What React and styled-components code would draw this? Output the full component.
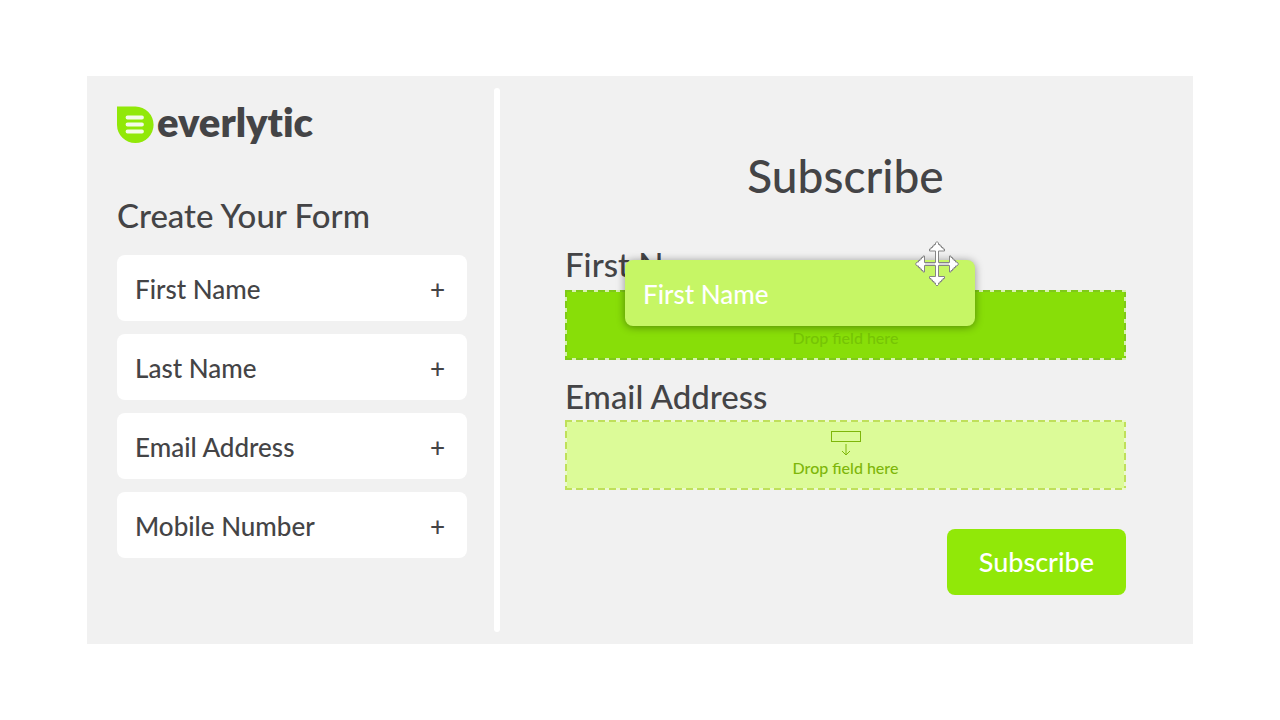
import React from "react";
import styled, { createGlobalStyle } from "styled-components";

const GlobalStyle = createGlobalStyle`
  *, *::before, *::after { box-sizing: border-box; }
  body {
    margin: 0;
    background: #ffffff;
    color: #444446;
    font-family: Lato, "Noto Sans", sans-serif;
    font-weight: 500;
  }
  button { font: inherit; color: inherit; border: 0; cursor: pointer; }
`;

const Page = styled.div`
  display: flex;
  flex-direction: column;
  min-height: 100vh;
  padding: 76px 87px;
`;

const Builder = styled.main`
  display: grid;
  grid-template-columns: minmax(0, 407fr) 6px minmax(0, 693fr);
  flex: 1;
  padding: 12px 0;
  background: #f1f1f1;
`;

const Sidebar = styled.aside`
  padding: 18px 27px 0 30px;
`;

const Divider = styled.div`
  border-radius: 3px;
  background: #ffffff;
`;

const Brand = styled.div`
  display: flex;
  align-items: center;
  gap: 3px;
  height: 38px;
`;

const Wordmark = styled.span`
  padding-bottom: 6px;
  font-size: 40px;
  line-height: 32px;
  font-weight: 800;
  font-variant-ligatures: none;
`;

const PanelTitle = styled.h2`
  margin: 51px 0 0;
  font-size: 33px;
  line-height: 40px;
  font-weight: 500;
`;

const FieldList = styled.ul`
  display: flex;
  flex-direction: column;
  gap: 13px;
  margin: 20px 0 0;
  padding: 0;
  list-style: none;
`;

const FieldCard = styled.button`
  display: flex;
  align-items: center;
  justify-content: space-between;
  width: 100%;
  height: 66px;
  padding: 2px 22px 0 18px;
  border-radius: 8px;
  background: #ffffff;
  font-size: 26px;
  line-height: 32px;
`;

const Canvas = styled.section`
  padding: 64px 67px 0 65px;
`;

const FormTitle = styled.h1`
  margin: 0;
  font-size: 46px;
  line-height: 48px;
  font-weight: 500;
  text-align: center;
`;

const Field = styled.div`
  margin-top: ${(p) => (p.$first ? 44 : 16)}px;
`;

const FieldLabel = styled.h3`
  margin: 0;
  font-size: 33px;
  line-height: 40px;
  font-weight: 500;
`;

const dashes = (angle, dash, gap) =>
  `repeating-linear-gradient(${angle}, ${dash} 0 7px, ${gap} 7px 11px)`;

const DropZone = styled.div`
  --dash: ${(p) => (p.$active ? "#7fca18" : "#bfe05a")};
  --gap: ${(p) => (p.$active ? "#d8f2b0" : "#ebf9cc")};
  position: relative;
  display: flex;
  flex-direction: column;
  align-items: center;
  height: 70px;
  margin-top: ${(p) => (p.$active ? 6 : 4)}px;
  padding-top: 10px;
  background:
    ${dashes("90deg", "var(--dash)", "var(--gap)")} top / 100% 2px no-repeat,
    ${dashes("90deg", "var(--dash)", "var(--gap)")} bottom / 100% 2px no-repeat,
    ${dashes("180deg", "var(--dash)", "var(--gap)")} left / 2px 100% no-repeat,
    ${dashes("180deg", "var(--dash)", "var(--gap)")} right / 2px 100% no-repeat,
    ${(p) => (p.$active ? "#88de08" : "#dcfb98")};
  color: ${(p) => (p.$active ? "#76c405" : "#7eb60a")};
  font-size: 16px;
  line-height: 20px;
`;

const DraggedCard = styled.div`
  position: absolute;
  top: -30px;
  left: 60px;
  display: flex;
  align-items: center;
  width: 350px;
  height: 66px;
  padding: 2px 18px 0;
  border-radius: 8px;
  background: #c6f665;
  box-shadow: 0 1px 8px rgba(0, 0, 0, 0.4);
  color: #ffffff;
  font-size: 26px;
  line-height: 32px;
`;

const MoveCursor = styled.svg`
  position: absolute;
  top: -19px;
  right: 16px;
`;

const Actions = styled.div`
  display: flex;
  justify-content: flex-end;
  margin-top: 39px;
`;

const SubmitButton = styled.button`
  height: 66px;
  padding: 0 32px;
  border-radius: 8px;
  background: #91e808;
  color: #ffffff;
  font-size: 27px;
  line-height: 32px;
`;

const FIELDS = ["First Name", "Last Name", "Email Address", "Mobile Number"];

function Logo() {
  return (
    <svg width="37" height="38" viewBox="0 0 37 38" aria-hidden="true">
      <path d="M0 0.5H18.5A18.3 18.3 0 1 1 0 19Z" fill="#91e808" />
      <path d="M10.5 11.5H25M10.5 18.5H25M10.5 25.5H25" stroke="#f4fbe8" strokeWidth="3.8" strokeLinecap="round" />
    </svg>
  );
}

function DropHint() {
  return (
    <>
      <svg width="30" height="28" viewBox="0 0 30 28" fill="none" stroke="currentColor" aria-hidden="true">
        <rect x="0.5" y="1.5" width="29" height="10" />
        <path d="M15 14V25M11 21L15 25L19 21" />
      </svg>
      <span>Drop field here</span>
    </>
  );
}

function MoveIcon() {
  return (
    <MoveCursor width="44" height="46" viewBox="0 0 44 46" aria-hidden="true">
      <path
        d="M22 .5L23.5 2V3.5H25V5H26.5V6.5H28V8H29.5V10H23.5V21.5H34.5V15H36V16.5H37.5V18H39V19.5H40.5V21H42L43.5 23L42 25H40.5V26.5H39V28H37.5V29.5H36V31H34.5V24.5H23.5V35.5H29.5V37.5H28V39H26.5V40.5H25V42H23.5V43.5L22 45L20.5 43.5V42H19V40.5H17.5V39H16V37.5H14.5V35.5H20.5V24.5H9.5V31H8V29.5H6.5V28H5V26.5H3.5V25H2L.5 23L2 21H3.5V19.5H5V18H6.5V16.5H8V15H9.5V21.5H20.5V10H14.5V8H16V6.5H17.5V5H19V3.5H20.5V2Z"
        fill="#ffffff"
        stroke="#858585"
        strokeWidth="1"
      />
      <path d="M10 23H20M24 23H34" stroke="#d9d9d9" strokeWidth="2" />
    </MoveCursor>
  );
}

export default function App() {
  return (
    <>
      <GlobalStyle />
      <Page>
        <Builder>
          <Sidebar>
            <Brand>
              <Logo />
              <Wordmark>everlytic</Wordmark>
            </Brand>
            <PanelTitle>Create Your Form</PanelTitle>
            <FieldList>
              {FIELDS.map((name) => (
                <li key={name}>
                  <FieldCard type="button">
                    <span>{name}</span>
                    <span>+</span>
                  </FieldCard>
                </li>
              ))}
            </FieldList>
          </Sidebar>
          <Divider />
          <Canvas>
            <FormTitle>Subscribe</FormTitle>
            <Field $first>
              <FieldLabel id="first-name">First Name</FieldLabel>
              <DropZone $active role="group" aria-labelledby="first-name">
                <DropHint />
                <DraggedCard>
                  First Name
                  <MoveIcon />
                </DraggedCard>
              </DropZone>
            </Field>
            <Field>
              <FieldLabel id="email-address">Email Address</FieldLabel>
              <DropZone role="group" aria-labelledby="email-address">
                <DropHint />
              </DropZone>
            </Field>
            <Actions>
              <SubmitButton type="button">Subscribe</SubmitButton>
            </Actions>
          </Canvas>
        </Builder>
      </Page>
    </>
  );
}
